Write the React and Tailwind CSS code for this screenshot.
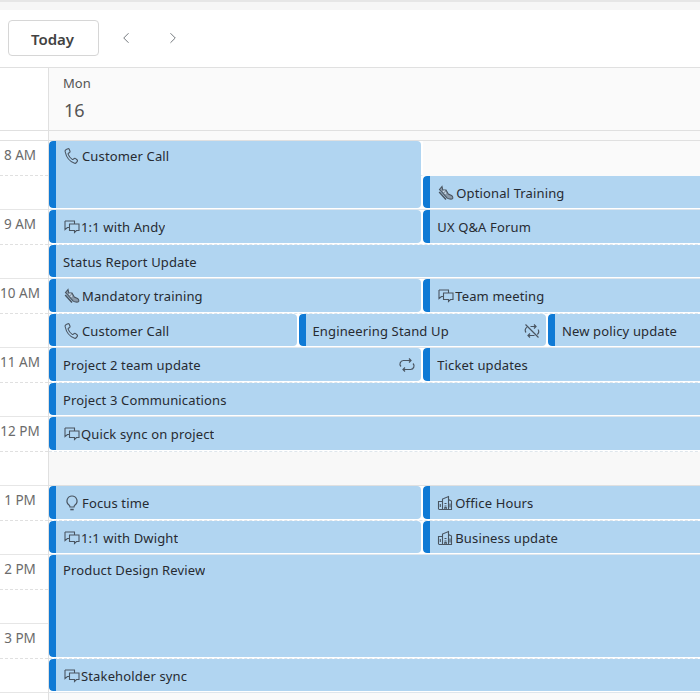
import React from "react";
import { ChevronLeft, ChevronRight } from "lucide-react";

const Phone = () => (
  <svg width="18" height="18" viewBox="0 0 18 18" fill="none" stroke="#4a5561" strokeWidth="1.1" className="shrink-0">
    <path d="M3.2 2.4 5 1.7c.5-.2 1 0 1.2.5l.8 2c.2.5 0 1-.4 1.3l-1.2.8c-.3.2-.4.5-.3.8.8 2.200 2.200 4.100 4.100 5.300.3.200.6.200.9 0l1.200-.9c.4-.3 1-.3 1.400.1l1.500 1.400c.4.400.4 1 .1 1.400l-1 1.300c-.4.500-1.100.800-1.700.600C7.400 14.800 3.300 10.300 2.100 4.500c-.2-.8.300-1.700 1.100-2.100Z" />
  </svg>
);

const Chat = () => (
  <svg width="18" height="18" viewBox="0 0 18 18" fill="none" stroke="#4a5561" strokeWidth="1.1" className="shrink-0 -mr-px">
    <path d="M2 3h9.500v3M6.500 6H16v6.500h-2.500l-2 2v-2h-5V6ZM6.500 9.500H4.500L2 11.500V3" />
  </svg>
);

const Shoe = () => (
  <svg width="18" height="18" viewBox="0 0 18 18" fill="none" stroke="#4a5561" strokeWidth="1.1" className="shrink-0">
    <path d="M5 2.500 2.500 5.500l7.500 8.300c1.200 1.200 4.500 1.800 5.500.8.700-.8.200-2.300-1-3l-3.200-1.600-2.300-4-3.300-.2L5 2.500Z" fill="#8a9aaa" />
    <path d="m2.200 8 6.800 7.500" strokeWidth="1.500" />
    <path d="m7.500 6.500-1.300 1.300M9 8.500 7.700 9.800" stroke="#d5e4f0" />
  </svg>
);

const Bulb = () => (
  <svg width="18" height="18" viewBox="0 0 18 18" fill="none" stroke="#4a5561" strokeWidth="1.200" className="shrink-0">
    <path d="M9 2a5 5 0 0 0-3 9c.7.6 1 1.100 1 2h4c0-.9.3-1.400 1-2a5 5 0 0 0-3-9Z" />
    <path d="M7.300 15.500h3.400" strokeWidth="1.600" />
  </svg>
);

const Building = () => (
  <svg width="18" height="18" viewBox="0 0 18 18" fill="none" stroke="#4a5561" strokeWidth="1.100" className="shrink-0 -mr-px">
    <path d="M1.500 15.500V7.500h4M5.500 15.500V5l6-2.500v13M11.500 5.500l3 1.500v8.500H2" />
    <path d="M7.500 9.500h2M7.500 12h2M7.800 15v-1.500h1.500V15M3.300 10v3M13 9.500v4" />
  </svg>
);

const Repeat = () => (
  <svg width="18" height="18" viewBox="0 0 18 18" fill="none" stroke="#4a5561" strokeWidth="1.200" className="shrink-0">
    <path d="M11 2.500 13 4.500 11 6.500M13 4.500H5.500A3.500 3.500 0 0 0 3 10.500M7 15.500 5 13.500 7 11.500M5 13.500h7.500A3.500 3.500 0 0 0 15 7.500" />
  </svg>
);

const RepeatOff = () => (
  <svg width="18" height="18" viewBox="0 0 18 18" fill="none" stroke="#4a5561" strokeWidth="1.200" className="shrink-0">
    <path d="M11 2.500 13 4.500 11 6.500M13 4.500H7.500M4 5.200A3.500 3.500 0 0 0 3 10.500M7 15.500 5 13.500 7 11.500M5 13.500h6.500M14.300 12.500A3.500 3.500 0 0 0 15 7.500M2.500 2.500l13 13" />
  </svg>
);

const times = ["8 AM", "", "9 AM", "", "10 AM", "", "11 AM", "", "12 PM", "", "1 PM", "", "2 PM", "", "3 PM", ""];

// background lines of the day column, solid on the hour and dashed on the half hour
const slotLines = [
  "row-start-1 border-dashed", "row-start-2", "row-start-3 border-dashed", "row-start-4",
  "row-start-5 border-dashed", "row-start-6", "row-start-7 border-dashed", "row-start-8",
  "row-start-9 border-dashed", "row-start-10", "row-start-11 border-dashed", "row-start-12",
  "row-start-13 border-dashed", "row-start-14", "row-start-15 border-dashed", "row-start-16",
];

function Event({ pos, title, icon, end, tall }) {
  return (
    <div className={`${pos} mb-[2px] mr-[2px] flex items-start overflow-hidden rounded-[4px] bg-[#b1d5f1]`}>
      <div className="h-full w-[7px] shrink-0 rounded-l-[4px] bg-[#0f7ad5]" />
      <div className={`flex min-w-0 flex-1 items-center pl-[7px] pr-[5px] ${tall ? "pt-[5px]" : "pt-[7px]"}`}>
        {icon}
        <span className={`truncate text-[13px] leading-[20px] tracking-[0.14px] text-[#272b32] ${icon ? "ml-[1px]" : ""}`}>{title}</span>
        {end && <span className="ml-auto">{end}</span>}
      </div>
    </div>
  );
}

export default function App() {
  return (
    <div className="h-[700px] w-[700px] overflow-hidden bg-white font-['Noto_Sans','Open_Sans',sans-serif]">
      <div className="h-[10px] border-t-2 border-[#e6e6e6] bg-[#f6f6f6]" />

      {/* Toolbar */}
      <div className="flex h-[57px] items-center pb-[1px] pl-2">
        <button className="h-[36px] w-[91px] rounded-[4px] border border-[#d6d6d6] bg-white pt-[3px] pr-[2px] text-[15px] font-semibold text-[#424242]">
          Today
        </button>
        <ChevronLeft size={18} strokeWidth={1.3} className="ml-[18px] text-[#70757a]" />
        <ChevronRight size={18} strokeWidth={1.3} className="ml-[29px] text-[#70757a]" />
      </div>

      {/* Day header */}
      <div className="flex h-[64px] border-y border-[#e0e0e0]">
        <div className="w-[49px] shrink-0 border-r border-[#e0e0e0]" />
        <div className="flex-1 bg-[#fafafa] pl-[14px] pt-[5px] text-[#545454]">
          <div className="text-[13px] leading-[20px]">Mon</div>
          <div className="mt-[5px] pl-[1px] text-[18px] leading-[24px]">16</div>
        </div>
      </div>
      <div className="flex h-[10px] border-b border-[#e0e0e0]">
        <div className="w-[49px] shrink-0 border-r border-[#e0e0e0]" />
        <div className="flex-1 bg-[#fafafa]" />
      </div>

      {/* Week body */}
      <div className="flex">
        <div className="grid w-[49px] shrink-0 grid-rows-[repeat(16,34.5px)_10px] border-r border-[#e0e0e0]">
          {times.map((label, i) => (
            <div
              key={i}
              className={`w-full pr-[8px] pt-[4px] text-center text-[13.5px] leading-[20px] whitespace-nowrap text-[#6b6b6b] border-b ${label ? "border-dashed border-[#e0e0e0]" : "border-[#e6e6e6]"}`}
            >
              {label}
            </div>
          ))}
        </div>

        <div className="grid grid-cols-[repeat(6,124.75px)] grid-rows-[repeat(16,34.5px)_10px] bg-white">
          {slotLines.map((line) => (
            <div key={line} className={`${line} col-span-6 col-start-1 border-b border-[#dfe6ec]`} />
          ))}
          <div className="col-span-3 col-start-4 row-start-1 bg-[#fafafa]" />
          <div className="col-span-6 col-start-1 row-start-10 border-b border-[#e0e0e0] bg-[#f8f8f8]" />
          <div className="col-span-6 col-start-1 row-start-17 bg-[#fafafa]" />

          <Event tall pos="col-span-3 col-start-1 row-span-2 row-start-1" title="Customer Call" icon={<Phone />} />
          <Event pos="col-span-3 col-start-4 row-start-2" title="Optional Training" icon={<Shoe />} />
          <Event pos="col-span-3 col-start-1 row-start-3" title="1:1 with Andy" icon={<Chat />} />
          <Event pos="col-span-3 col-start-4 row-start-3" title="UX Q&A Forum" />
          <Event pos="col-span-6 col-start-1 row-start-4" title="Status Report Update" />
          <Event pos="col-span-3 col-start-1 row-start-5" title="Mandatory training" icon={<Shoe />} />
          <Event pos="col-span-3 col-start-4 row-start-5" title="Team meeting" icon={<Chat />} />
          <Event pos="col-span-2 col-start-1 row-start-6" title="Customer Call" icon={<Phone />} />
          <Event pos="col-span-2 col-start-3 row-start-6" title="Engineering Stand Up" end={<RepeatOff />} />
          <Event pos="col-span-2 col-start-5 row-start-6" title="New policy update" />
          <Event pos="col-span-3 col-start-1 row-start-7" title="Project 2 team update" end={<Repeat />} />
          <Event pos="col-span-3 col-start-4 row-start-7" title="Ticket updates" />
          <Event pos="col-span-6 col-start-1 row-start-8" title="Project 3 Communications" />
          <Event pos="col-span-6 col-start-1 row-start-9" title="Quick sync on project" icon={<Chat />} />
          <Event pos="col-span-3 col-start-1 row-start-11" title="Focus time" icon={<Bulb />} />
          <Event pos="col-span-3 col-start-4 row-start-11" title="Office Hours" icon={<Building />} />
          <Event pos="col-span-3 col-start-1 row-start-12" title="1:1 with Dwight" icon={<Chat />} />
          <Event pos="col-span-3 col-start-4 row-start-12" title="Business update" icon={<Building />} />
          <Event tall pos="col-span-6 col-start-1 row-span-3 row-start-13" title="Product Design Review" />
          <Event pos="col-span-6 col-start-1 row-start-16" title="Stakeholder sync" icon={<Chat />} />
        </div>
      </div>
    </div>
  );
}
